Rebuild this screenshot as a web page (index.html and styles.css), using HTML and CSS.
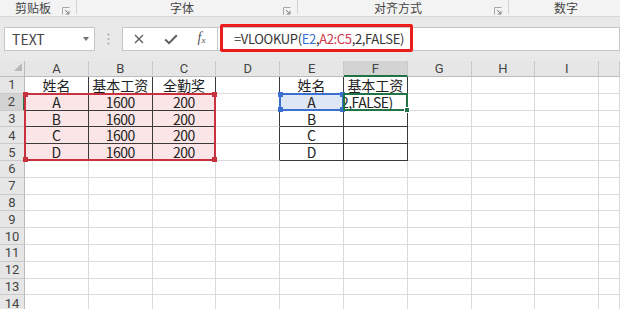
FILE: index.html
```html
<!DOCTYPE html>
<html lang="zh-CN">
<head>
<meta charset="utf-8">
<title>VLOOKUP</title>
<link rel="stylesheet" href="styles.css">
</head>
<body>
<div class="ribbon">
  <div class="grp g1"><span class="glabel">剪贴板</span><svg class="launch" width="8" height="8" viewBox="0 0 8 8"><path d="M0.5 7.5V0.5H7.5" stroke="#a8a8a8" fill="none"/><path d="M3 3L6.5 6.5M3.8 7H7V3.8" stroke="#7a7a7a" fill="none"/></svg></div>
  <div class="grp g2"><span class="glabel">字体</span><svg class="launch" width="8" height="8" viewBox="0 0 8 8"><path d="M0.5 7.5V0.5H7.5" stroke="#a8a8a8" fill="none"/><path d="M3 3L6.5 6.5M3.8 7H7V3.8" stroke="#7a7a7a" fill="none"/></svg></div>
  <div class="grp g3"><span class="glabel">对齐方式</span><svg class="launch" width="8" height="8" viewBox="0 0 8 8"><path d="M0.5 7.5V0.5H7.5" stroke="#a8a8a8" fill="none"/><path d="M3 3L6.5 6.5M3.8 7H7V3.8" stroke="#7a7a7a" fill="none"/></svg></div>
  <div class="grp g4"><span class="glabel">数字</span></div>
</div>
<div class="fbar">
  <div class="namebox"><span>TEXT</span><i class="drop"></i></div>
  <div class="dots"><svg width="3" height="12" viewBox="0 0 3 12"><circle cx="1.5" cy="1.5" r="1" fill="#a9a9a9"/><circle cx="1.5" cy="6" r="1" fill="#a9a9a9"/><circle cx="1.5" cy="10.5" r="1" fill="#a9a9a9"/></svg></div>
  <div class="fnbox">
    <span class="fbtn"><svg width="10" height="10" viewBox="0 0 10 10"><path d="M1 1L9 9M9 1L1 9" stroke="#5e5e5e" stroke-width="1.4"/></svg></span>
    <span class="fbtn"><svg width="14" height="11" viewBox="0 0 14 11"><path d="M1.2 5.6L5 9.2L12.8 1.2" stroke="#5e5e5e" stroke-width="2" fill="none"/></svg></span>
    <span class="fbtn"><i class="fx">f<sub>x</sub></i></span>
  </div>
  <div class="finput">=VLOOKUP(<span class="rb">E2</span>,<span class="rr">A2:C5</span>,2,FALSE)</div>
</div>
<div class="mark"></div>
<div class="sheet">
  <div class="grid">
    <div class="corner"><svg width="8" height="8" viewBox="0 0 8 8"><polygon points="8,0 8,8 0,8" fill="#b8b8b8"/></svg></div>
    <div class="ch">A</div><div class="ch">B</div><div class="ch">C</div><div class="ch">D</div><div class="ch">E</div><div class="ch sel">F</div><div class="ch">G</div><div class="ch">H</div><div class="ch">I</div><div class="ch"></div>

    <div class="rh">1</div>
    <div class="c b">姓名</div><div class="c b">基本工资</div><div class="c b">全勤奖</div><div class="c dr"></div><div class="c b">姓名</div><div class="c b">基本工资</div><div class="c"></div><div class="c"></div><div class="c"></div><div class="c"></div>

    <div class="rh sel">2</div>
    <div class="c b p">A</div><div class="c b p n">1600</div><div class="c b p n">200</div><div class="c dr"></div><div class="c b bl">A</div><div class="c b edit n"><span>=VLOOKUP(E2,A2:C5,2,FALSE)</span></div><div class="c"></div><div class="c"></div><div class="c"></div><div class="c"></div>

    <div class="rh">3</div>
    <div class="c b p">B</div><div class="c b p n">1600</div><div class="c b p n">200</div><div class="c dr"></div><div class="c b">B</div><div class="c b"></div><div class="c"></div><div class="c"></div><div class="c"></div><div class="c"></div>

    <div class="rh">4</div>
    <div class="c b p">C</div><div class="c b p n">1600</div><div class="c b p n">200</div><div class="c dr"></div><div class="c b">C</div><div class="c b"></div><div class="c"></div><div class="c"></div><div class="c"></div><div class="c"></div>

    <div class="rh">5</div>
    <div class="c b p">D</div><div class="c b p n">1600</div><div class="c b p n">200</div><div class="c dr"></div><div class="c b">D</div><div class="c b"></div><div class="c"></div><div class="c"></div><div class="c"></div><div class="c"></div>

    <div class="rh">6</div><div class="c"></div><div class="c"></div><div class="c"></div><div class="c"></div><div class="c"></div><div class="c"></div><div class="c"></div><div class="c"></div><div class="c"></div><div class="c"></div>
    <div class="rh">7</div><div class="c"></div><div class="c"></div><div class="c"></div><div class="c"></div><div class="c"></div><div class="c"></div><div class="c"></div><div class="c"></div><div class="c"></div><div class="c"></div>
    <div class="rh">8</div><div class="c"></div><div class="c"></div><div class="c"></div><div class="c"></div><div class="c"></div><div class="c"></div><div class="c"></div><div class="c"></div><div class="c"></div><div class="c"></div>
    <div class="rh">9</div><div class="c"></div><div class="c"></div><div class="c"></div><div class="c"></div><div class="c"></div><div class="c"></div><div class="c"></div><div class="c"></div><div class="c"></div><div class="c"></div>
    <div class="rh">10</div><div class="c"></div><div class="c"></div><div class="c"></div><div class="c"></div><div class="c"></div><div class="c"></div><div class="c"></div><div class="c"></div><div class="c"></div><div class="c"></div>
    <div class="rh">11</div><div class="c"></div><div class="c"></div><div class="c"></div><div class="c"></div><div class="c"></div><div class="c"></div><div class="c"></div><div class="c"></div><div class="c"></div><div class="c"></div>
    <div class="rh">12</div><div class="c"></div><div class="c"></div><div class="c"></div><div class="c"></div><div class="c"></div><div class="c"></div><div class="c"></div><div class="c"></div><div class="c"></div><div class="c"></div>
    <div class="rh">13</div><div class="c"></div><div class="c"></div><div class="c"></div><div class="c"></div><div class="c"></div><div class="c"></div><div class="c"></div><div class="c"></div><div class="c"></div><div class="c"></div>
    <div class="rh">14</div><div class="c"></div><div class="c"></div><div class="c"></div><div class="c"></div><div class="c"></div><div class="c"></div><div class="c"></div><div class="c"></div><div class="c"></div><div class="c"></div>
  </div>
  <div class="ovl">
    <div class="rng red"><i class="hd tl"></i><i class="hd tr"></i><i class="hd bl2"></i><i class="hd br"></i></div>
    <div class="rng blue"><i class="hd tl"></i><i class="hd tr"></i><i class="hd bl2"></i><i class="hd br"></i></div>
    <div class="rng green"><i class="fill"></i></div>
  </div>
</div>
</body>
</html>
```
FILE: styles.css
```css
* { box-sizing: border-box; margin: 0; padding: 0; }
body {
  width: 620px; height: 309px; overflow: hidden; background: #fff; position: relative;
  font-family: "Noto Sans CJK SC", "Noto Sans", sans-serif; color: #222;
}
.ribbon { height: 17px; background: #f3f3f3; border-bottom: 1px solid #d6d6d6; display: flex; }
.grp { display: flex; height: 14px; border-right: 1px solid #d2d2d2; }
.g1 { width: 77px; }
.g2 { width: 221px; }
.g3 { width: 211px; }
.g4 { width: 110px; border-right: none; }
.glabel { flex: 1; text-align: center; font-size: 12px; line-height: 16px; color: #444; padding-left: 4px; }
.launch { margin: 7px 6px 0 0; }
.fbar { height: 44px; background: #e9e9e9; display: flex; padding: 10px 0 10px 4px; }
.namebox {
  width: 91px; height: 24px; background: #fff; border: 1px solid #c6c6c6;
  display: flex; align-items: center; padding-left: 7px; font-size: 14px; color: #444; line-height: 20px;
}
.drop { margin-left: auto; margin-right: 5px; width: 0; height: 0; border-top: 4px solid #707070; border-left: 3.5px solid transparent; border-right: 3.5px solid transparent; }
.dots { width: 27px; display: flex; align-items: center; justify-content: center; }
.fnbox { width: 96px; height: 24px; background: #fff; border: 1px solid #c6c6c6; display: flex; }
.fbtn { width: 31px; display: flex; align-items: center; justify-content: center; }
.fbtn:first-child { width: 32px; }
.fx { font-family: "Liberation Serif", serif; font-style: italic; font-size: 14px; color: #555; line-height: 14px; }
.fx sub { font-size: 9px; vertical-align: -1px; }
.finput {
  flex: 1; height: 24px; background: #fff; border: 1px solid #c6c6c6; border-left: none;
  padding-left: 16px; font-size: 13px; letter-spacing: -0.35px; line-height: 22px; color: #333; white-space: nowrap;
}
.rb { color: #3b6fcc; }
.rr { color: #d0374a; }
.mark { position: absolute; left: 220px; top: 24px; width: 193px; height: 28px; border: 3px solid #ec1c1c; border-radius: 2px; }
.sheet { position: relative; height: 248px; overflow: hidden; }
.grid, .ovl {
  display: grid;
  grid-template-columns: 25px repeat(9, 63.8px) 1fr;
  grid-template-rows: 16px repeat(14, 16.8px);
}
.ovl { position: absolute; left: 0; top: 0; right: 0; bottom: 0; pointer-events: none; }
.c {
  border-right: 1px solid #dadada; border-bottom: 1px solid #dadada;
  display: flex; align-items: center; justify-content: center;
  font-size: 14px; line-height: 16px; color: #222; white-space: nowrap; overflow: hidden;
}
.n { letter-spacing: -0.5px; }
.b { border-right-color: #3a3a3a; border-bottom-color: #3a3a3a; }
.dr { border-right-color: #3a3a3a; }
.p { background: #fbe5e6; }
.bl { background: #dde7f5; }
.edit { justify-content: flex-end; padding-right: 14px; }
.corner {
  background: #e6e6e6; border-right: 1px solid #bcbcbc; border-bottom: 1px solid #bcbcbc;
  display: flex; justify-content: flex-end; align-items: flex-end; padding: 0 2px 5px 0;
}
.ch {
  background: #e6e6e6; border-right: 1px solid #cacaca; border-bottom: 1px solid #bcbcbc;
  display: flex; align-items: center; justify-content: center;
  font-family: Roboto, "Noto Sans", sans-serif; font-size: 13px; line-height: 15px; color: #444;
}
.ch.sel { background: #d3d3d3; border-bottom: 2px solid #217346; }
.rh {
  background: #e6e6e6; border-right: 1px solid #bcbcbc; border-bottom: 1px solid #cacaca;
  display: flex; align-items: center; justify-content: center;
  font-family: Roboto, "Noto Sans", sans-serif; font-size: 13px; line-height: 15px; color: #444;
}
.rh.sel { background: #d3d3d3; border-right: 2px solid #217346; }
.rng { position: relative; margin: -1px 0 0 -1px; border: 2px solid; }
.red { grid-column: 2 / 5; grid-row: 3 / 7; border-color: #c8323e; }
.blue { grid-column: 6 / 7; grid-row: 3 / 4; border-color: #3a70cf; }
.green { grid-column: 7 / 8; grid-row: 3 / 4; border-color: #217346; }
.hd { position: absolute; width: 5px; height: 5px; }
.red .hd { background: #c8323e; }
.blue .hd { background: #3a70cf; }
.tl { left: -3px; top: -3px; }
.tr { right: -3px; top: -3px; }
.bl2 { left: -3px; bottom: -3px; }
.br { right: -3px; bottom: -3px; }
.fill { position: absolute; right: -4px; bottom: -4px; width: 6px; height: 6px; background: #217346; border: 1px solid #fff; }
```
